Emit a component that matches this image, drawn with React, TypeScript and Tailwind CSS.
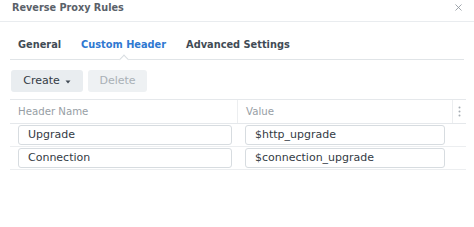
import { X } from 'lucide-react';

const rows = [
  { name: 'Upgrade', value: '$http_upgrade' },
  { name: 'Connection', value: '$connection_upgrade' },
];

export default function App() {
  return (
    <div className="w-[474px] h-[227px] bg-white overflow-hidden text-[#414b55]" style={{ fontFamily: '"DejaVu Sans", Verdana, sans-serif' }}>
      <div className="h-[22px] flex items-start justify-between border-b border-[#e9ecef] pl-[12px] pr-[10px]">
        <span className="text-[9.7px] font-bold text-[#5a6169] leading-none pt-[3px]">Reverse Proxy Rules</span>
        <X className="w-[11px] h-[11px] text-[#8d949b] mt-[2px]" strokeWidth={1.8} />
      </div>

      <div className="mx-[10px] mt-[14px] h-[24px] border-b border-[#e0e4e7] flex items-start gap-[20px] pl-[8px] relative">
        <span className="text-[9.8px] font-bold leading-[18px]">General</span>
        <span className="text-[9.8px] font-bold leading-[18px] text-[#2f78d1] relative">
          Custom Header
          <span className="absolute left-1/2 -translate-x-1/2 top-[20px] w-[7px] h-[7px] bg-white border-l border-t border-[#d8dde1] rotate-45" />
        </span>
        <span className="text-[9.8px] font-bold leading-[18px]">Advanced Settings</span>
      </div>

      <div className="mx-[11px] mt-[10px] flex gap-[5px]">
        <button className="h-[22px] w-[72px] rounded-[3px] bg-[#e9edf0] text-[11px] text-[#333b44] flex items-center justify-center gap-[5px]">
          Create
          <svg width="6" height="4" viewBox="0 0 6 4" className="text-[#414b55] mt-[1px]">
            <path d="M0.5 0.5 H5.5 L3 3.5 Z" fill="currentColor" />
          </svg>
        </button>
        <button className="h-[22px] w-[59px] rounded-[3px] bg-[#eef1f3] text-[11px] text-[#a9b0b6]">Delete</button>
      </div>

      <div className="mx-[10px] mt-[7px] w-[456px]">
        <div className="h-[25px] border-y border-[#e5e8eb] flex text-[10.2px] text-[#979ea5]">
          <div className="w-[228px] border-r border-[#eceef0] pl-[8px] flex items-center">Header Name</div>
          <div className="w-[215px] border-r border-[#eceef0] pl-[8px] flex items-center">Value</div>
          <div className="flex-1 flex items-center justify-center">
            <svg width="3" height="11" viewBox="0 0 3 11" className="text-[#a6adb3]">
              <circle cx="1.5" cy="1.5" r="1" fill="currentColor" />
              <circle cx="1.5" cy="5.5" r="1" fill="currentColor" />
              <circle cx="1.5" cy="9.5" r="1" fill="currentColor" />
            </svg>
          </div>
        </div>
        {rows.map((r) => (
          <div key={r.name} className="h-[23px] border-b border-[#eceef0] flex items-center text-[11px] text-[#333b44]">
            <div className="w-[228px] pl-[8px] pr-[6px]">
              <div className="h-[20px] rounded-[3px] border border-[#d7dce0] flex items-center pl-[9px]">{r.name}</div>
            </div>
            <div className="w-[215px] pl-[7px] pr-[8px]">
              <div className="h-[20px] rounded-[3px] border border-[#d7dce0] flex items-center pl-[9px]">{r.value}</div>
            </div>
          </div>
        ))}
      </div>
    </div>
  );
}
